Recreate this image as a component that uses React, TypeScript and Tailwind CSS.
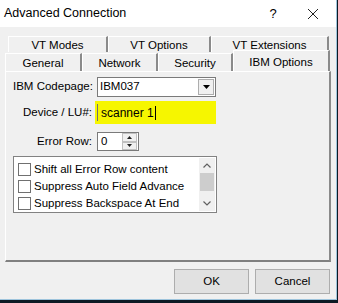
import React from "react";

const font = { fontFamily: '"Liberation Sans", Arial, sans-serif' };

function Tab({ label, w }: { label: string; w: string }) {
  return (
    <div
      className={`${w} h-full flex items-center justify-center pt-[3px] whitespace-nowrap border-t border-l border-white border-r-2 border-r-[#8a8a8a] text-[11.5px] text-black`}
    >
      {label}
    </div>
  );
}

function CheckRow({ label }: { label: string }) {
  return (
    <div className="flex items-center h-[17px] gap-[3px]">
      <div className="w-[13px] h-[13px] border border-[#707070] bg-white shrink-0" />
      <span className="text-[11.5px] text-black leading-none whitespace-nowrap">{label}</span>
    </div>
  );
}

export default function App() {
  return (
    <div className="w-[338px] h-[303px] bg-[#0d1a24] overflow-hidden" style={font}>
      <div className="w-[337px] h-[300px] bg-[#f0f0f0] border-r border-b border-[#9ec4dc] flex flex-col">
        {/* Title bar */}
        <div className="h-[27px] bg-white flex items-center pl-[4px] shrink-0">
          <span className="text-[12.5px] text-black flex-1 whitespace-nowrap">Advanced Connection</span>
          <span className="text-[13px] text-black w-[20px] mr-[24px] text-center">?</span>
          <svg width="12" height="12" viewBox="0 0 12 12" className="mr-[17px]">
            <path d="M1 1 L11 11 M11 1 L1 11" stroke="#222" strokeWidth="1" />
          </svg>
        </div>

        {/* Tabs */}
        <div className="pl-[5px] pt-[9px]">
          <div className="flex h-[16px] pl-[3px]">
            <Tab label="VT Modes" w="w-[100px]" />
            <Tab label="VT Options" w="w-[103px]" />
            <Tab label="VT Extensions" w="w-[118px]" />
          </div>
          <div className="flex h-[19px] items-end">
            <div className="flex h-[18px]">
              <Tab label="General" w="w-[77px]" />
              <Tab label="Network" w="w-[76px]" />
              <Tab label="Security" w="w-[75px]" />
            </div>
            <div className="w-[97px] h-[21px] -mt-[3px] flex items-start justify-center pt-[3px] whitespace-nowrap border-t border-l border-white border-r-2 border-r-[#8a8a8a] bg-[#f0f0f0] text-[11.5px] text-black relative z-10">
              IBM Options
            </div>
          </div>
        </div>

        {/* Panel */}
        <div className="ml-[5px] w-[326px] h-[191px] border-l border-t border-white border-r-2 border-b-2 border-r-[#8a8a8a] border-b-[#808080] flex flex-col pl-[7px] pt-[5px]">
          <div className="flex items-center h-[20px]">
            <span className="w-[84px] text-right text-[11.5px] text-black pr-[5px] whitespace-nowrap">IBM Codepage:</span>
            <div className="w-[119px] h-[20px] bg-white border border-[#7a7a7a] flex items-center">
              <span className="flex-1 pl-[2px] text-[11.5px] text-black">IBM037</span>
              <div className="w-[16px] h-[16px] mr-[1px] bg-[#f0f0f0] border border-[#adadad] flex items-center justify-center">
                <svg width="7" height="4" viewBox="0 0 7 4"><path d="M0 0 H7 L3.5 4 Z" fill="#000" /></svg>
              </div>
            </div>
          </div>

          <div className="flex items-center h-[23px] mt-[4px]">
            <span className="w-[84px] text-right text-[11.5px] text-black pr-[5px] whitespace-nowrap">Device / LU#:</span>
            <div className="w-[121px] h-[23px] -ml-[2px] bg-[#f6f600] flex items-center pl-[2px]">
              <div className="h-[17px] flex items-center border-l border-[#707070] pl-[3px] text-[12px] text-black whitespace-nowrap">
                scanner 1<span className="inline-block w-[1px] h-[14px] bg-black ml-[1px]" />
              </div>
            </div>
          </div>

          <div className="flex items-center h-[19px] mt-[8px]">
            <span className="w-[84px] text-right text-[11.5px] text-black pr-[5px] whitespace-nowrap">Error Row:</span>
            <div className="w-[42px] h-[19px] bg-white border border-[#7a7a7a] flex items-center">
              <span className="flex-1 pl-[3px] text-[11.5px] text-black">0</span>
              <div className="w-[15px] h-[17px] flex flex-col mr-[1px]">
                <div className="flex-1 bg-[#f0f0f0] border border-[#c0c0c0] flex items-center justify-center">
                  <svg width="5" height="3" viewBox="0 0 5 3"><path d="M0 3 L2.5 0 L5 3 Z" fill="#222" /></svg>
                </div>
                <div className="flex-1 bg-[#f0f0f0] border border-[#c0c0c0] flex items-center justify-center">
                  <svg width="5" height="3" viewBox="0 0 5 3"><path d="M0 0 H5 L2.5 3 Z" fill="#222" /></svg>
                </div>
              </div>
            </div>
          </div>

          <div className="w-[204px] h-[57px] mt-[5px] bg-white border border-[#828282] flex">
            <div className="flex-1 pl-[4px] pt-[4px] flex flex-col">
              <CheckRow label="Shift all Error Row content" />
              <CheckRow label="Suppress Auto Field Advance" />
              <CheckRow label="Suppress Backspace At End" />
            </div>
            <div className="w-[16px] flex flex-col bg-[#f0f0f0] mr-[1px] my-[1px]">
              <div className="h-[15px] flex items-center justify-center">
                <svg width="8" height="5" viewBox="0 0 8 5"><path d="M0.5 4.5 L4 1 L7.5 4.5" stroke="#606060" strokeWidth="1.2" fill="none" /></svg>
              </div>
              <div className="h-[18px] mx-[1px] bg-[#cdcdcd]" />
              <div className="flex-1" />
              <div className="h-[15px] flex items-center justify-center">
                <svg width="8" height="5" viewBox="0 0 8 5"><path d="M0.5 0.5 L4 4 L7.5 0.5" stroke="#606060" strokeWidth="1.2" fill="none" /></svg>
              </div>
            </div>
          </div>
        </div>

        {/* Buttons */}
        <div className="flex justify-end gap-[6px] pr-[6px] mt-[7px]">
          <button className="w-[75px] h-[25px] bg-[#e1e1e1] border border-[#adadad] text-[11.5px] text-black" style={font}>OK</button>
          <button className="w-[75px] h-[25px] bg-[#e1e1e1] border border-[#adadad] text-[11.5px] text-black" style={font}>Cancel</button>
        </div>
      </div>
    </div>
  );
}
